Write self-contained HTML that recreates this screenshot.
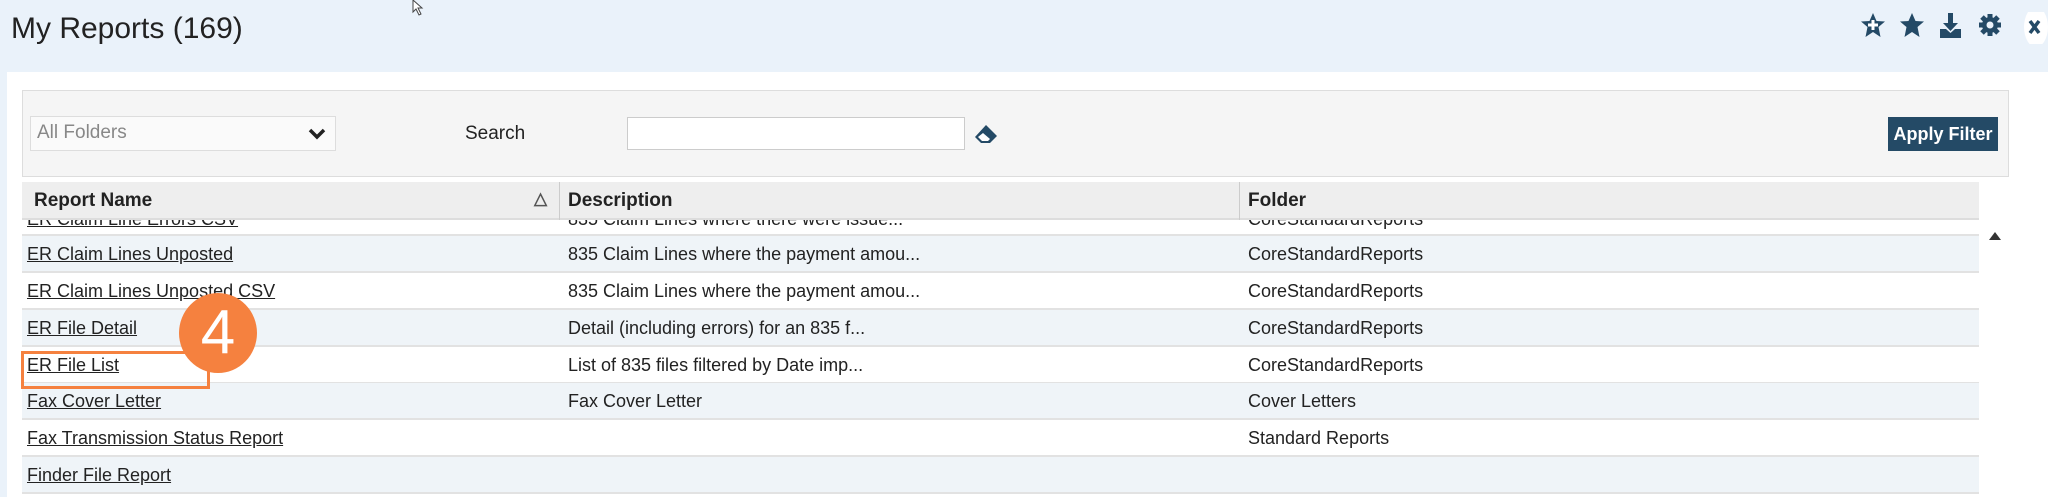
<!DOCTYPE html>
<html><head><meta charset="utf-8"><style>
*{box-sizing:border-box;margin:0;padding:0}
body{width:2048px;height:497px;overflow:hidden;background:#eaf2fa;font-family:"Liberation Sans Narrow","Liberation Sans",sans-serif;color:#222;position:relative}
.abs{position:absolute}
.title{left:11px;top:12px;font-size:30px;color:#222}
.panel{left:7px;top:72px;width:2041px;height:425px;background:#fff}
.filter{left:22px;top:90px;width:1987px;height:87px;background:#f5f5f5;border:1px solid #ddd}
.dd{left:30px;top:116px;width:306px;height:35px;background:#fafafa;border:1px solid #ddd;color:#888;font-size:19px;padding:5px 6px}
.inp{left:627px;top:117px;width:338px;height:33px;background:#fff;border:1px solid #ccc}
.btn{left:1888px;top:117px;width:110px;height:34px;background:#244a66;color:#fff;font-size:18px;font-weight:bold;text-align:center;line-height:34px}
.hdr{left:22px;top:182px;width:1957px;height:38px;background:#eee;border-bottom:2px solid #ddd;font-size:19px;font-weight:bold}
.hdr div{position:absolute;top:8px}
.row{position:absolute;left:22px;width:1957px;height:37px;border-bottom:2px solid #e2e2e2;font-size:18px}
.row span{position:absolute;top:8px}
.row .a{left:5px;text-decoration:underline;color:#222}
.row .b{left:546px}
.row .c{left:1226px}
.l{background:#eff4f8}
</style></head><body>
<div class="abs title">My Reports (169)</div>
<svg class="abs" style="left:412px;top:0" width="14" height="16"><path d="M1 0 L1 12 L4 9 L7 15 L9 14 L6 8 L10 8 Z" fill="#fff" stroke="#444" stroke-width="1"/></svg>
<svg class="abs" style="left:1860px;top:12px" width="188" height="32" viewBox="0 0 188 32">
<g fill="#244a66">
<path d="M13 1 L16.5 9 L25 9.5 L18.5 15 L20.5 25 L13 20 L5.5 25 L7.5 15 L1 9.5 L9.5 9 Z"/>
<rect x="11.5" y="8" width="3" height="10" fill="#fff"/><rect x="8" y="11.5" width="10" height="3" fill="#fff"/>
<path d="M52 1 L55.5 9 L64 9.5 L57.5 15 L59.5 25 L52 20 L44.5 25 L46.5 15 L40 9.5 L48.5 9 Z"/>
<rect x="88" y="1" width="5" height="11"/><path d="M83 11 L98 11 L90.5 19 Z"/><path d="M80 17 L86 17 L90.5 21 L95 17 L101 17 L101 26 L80 26 Z"/>
<circle cx="130" cy="13" r="8"/><g stroke="#244a66" stroke-width="5"><line x1="130" y1="2" x2="130" y2="24"/><line x1="119" y1="13" x2="141" y2="13"/><line x1="122" y1="5" x2="138" y2="21"/><line x1="138" y1="5" x2="122" y2="21"/></g><circle cx="130" cy="13" r="3.5" fill="#eaf2fa"/>
</g>
<ellipse cx="176" cy="15" rx="12" ry="20" fill="#fff"/>
<path d="M170 9 L179 21 M179 9 L170 21" stroke="#244a66" stroke-width="3.5"/>
</svg>
<div class="abs panel"></div>
<div class="abs filter"></div>
<div class="abs dd">All Folders</div>
<svg class="abs" style="left:308px;top:127px" width="18" height="14"><path d="M2 3 L9 10 L16 3" stroke="#222" stroke-width="3.5" fill="none"/></svg>
<div class="abs" style="left:465px;top:123px;font-size:19px">Search</div>
<div class="abs inp"></div>
<svg class="abs" style="left:972px;top:122px" width="28" height="24"><path d="M3 15 L14 3 L25 14 L18 21 L9 21 Z" fill="#244a66"/><path d="M6 15 L10 19 L16 19 L18 17 L11 11 Z" fill="#fff"/></svg>
<div class="abs btn">Apply Filter</div>
<div class="row" style="top:204px;height:32px"><span class="a" style="top:5px">ER Claim Line Errors CSV</span><span class="b" style="top:5px">835 Claim Lines where there were issue...</span><span class="c" style="top:5px">CoreStandardReports</span></div>
<div class="abs hdr"><div style="left:12px">Report Name</div><div style="left:546px">Description</div><div style="left:1226px">Folder</div>
<div style="left:537px;top:0;width:1px;height:38px;background:#ccc"></div><div style="left:1217px;top:0;width:1px;height:38px;background:#ccc"></div>
<div style="left:512px;top:7px;font-weight:bold;color:#555;font-size:17px">△</div></div>
<div class="row l" style="top:236px"><span class="a">ER Claim Lines Unposted</span><span class="b">835 Claim Lines where the payment amou...</span><span class="c">CoreStandardReports</span></div>
<div class="row" style="top:273px"><span class="a">ER Claim Lines Unposted CSV</span><span class="b">835 Claim Lines where the payment amou...</span><span class="c">CoreStandardReports</span></div>
<div class="row l" style="top:310px"><span class="a">ER File Detail</span><span class="b">Detail (including errors) for an 835 f...</span><span class="c">CoreStandardReports</span></div>
<div class="row" style="top:347px"><span class="a">ER File List</span><span class="b">List of 835 files filtered by Date imp...</span><span class="c">CoreStandardReports</span></div>
<div class="row l" style="top:383px"><span class="a">Fax Cover Letter</span><span class="b">Fax Cover Letter</span><span class="c">Cover Letters</span></div>
<div class="row" style="top:420px"><span class="a">Fax Transmission Status Report</span><span class="c">Standard Reports</span></div>
<div class="row l" style="top:457px"><span class="a">Finder File Report</span></div>
<div class="abs" style="left:1979px;top:220px;width:30px;height:277px;background:#fff"></div>
<svg class="abs" style="left:1988px;top:230px" width="14" height="12"><path d="M1 10 L7 2 L13 10 Z" fill="#333"/></svg>
<div class="abs" style="left:21px;top:351px;width:189px;height:38px;border:3px solid #f5813f"></div>
<div class="abs" style="left:179px;top:293px;width:78px;height:80px;border-radius:50%;background:#f5813f;color:#fff;font-size:62px;text-align:center;line-height:80px;font-family:'Liberation Sans',sans-serif">4</div>
</body></html>
